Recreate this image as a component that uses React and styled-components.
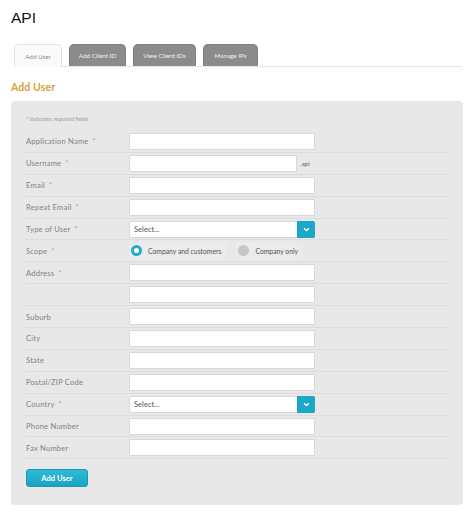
import React from "react";
import styled, { createGlobalStyle } from "styled-components";

const Global = createGlobalStyle`
  html, body { margin: 0; padding: 0; background: #fff; }
  body { font-family: "Lato", "Liberation Sans", sans-serif; }
  * { box-sizing: border-box; }
`;

const Page = styled.div`
  padding: 9px 11px 0 11px;
  width: 474px;
`;

const Title = styled.h1`
  margin: 0;
  font-family: "Liberation Sans", sans-serif;
  font-size: 15.5px;
  font-weight: 400;
  color: #111;
  line-height: 18px;
`;

const TabBar = styled.div`
  display: flex;
  gap: 7px;
  margin: 17px 1px 0 3px;
  border-bottom: 1px solid #e6e6e6;
  height: 23px;
  align-items: flex-end;
`;

const Tab = styled.div`
  width: ${(p) => p.$w}px;
  border-radius: 5px 5px 0 0;
  display: flex;
  align-items: center;
  justify-content: center;
  font-size: 6.3px;
  background: ${(p) => (p.$active ? "#fafafa" : "#8b8b8b")};
  color: ${(p) => (p.$active ? "#8a8a8a" : "#f2f2f2")};
  border: 1px solid ${(p) => (p.$active ? "#e2e2e2" : "#7f7f7f")};
  border-bottom: none;
  margin-bottom: ${(p) => (p.$active ? "-1px" : "0")};
  height: ${(p) => (p.$active ? "23px" : "22px")};
`;

const SectionTitle = styled.h2`
  margin: 14px 0 0 0;
  font-size: 10.5px;
  font-weight: 700;
  color: #d6a33e;
  line-height: 12px;
  letter-spacing: 0.1px;
`;

const Panel = styled.div`
  margin-top: 8px;
  width: 452px;
  background: #e8e8e8;
  border-radius: 4px;
  padding: 13px 15px 18px 14px;
`;

const Note = styled.div`
  font-size: 6px;
  font-style: italic;
  color: #a0a0a0;
  line-height: 10px;
  margin-bottom: 7px;
  padding-left: 1px;
`;

const Row = styled.div`
  display: grid;
  grid-template-columns: 103px 1fr;
  align-items: center;
  height: 21.9px;
  border-bottom: 1px solid #dddddd;
  padding-left: 1px;
`;

const Label = styled.div`
  font-size: 7.6px;
  color: #828282;
  letter-spacing: 0.2px;
`;

const Star = styled.span`
  color: #d6a33e;
  margin-left: 4px;
`;

const FieldWrap = styled.div`
  display: flex;
  align-items: center;
  gap: 3px;
`;

const Input = styled.div`
  width: ${(p) => p.$w || 186}px;
  height: 17px;
  background: #fff;
  border: 1px solid #d8d8d8;
  border-radius: 1px;
`;

const Suffix = styled.span`
  font-size: 6.3px;
  color: #666;
`;

const Select = styled.div`
  width: 186px;
  height: 17px;
  background: #fff;
  border: 1px solid #d8d8d8;
  border-radius: 2px;
  display: flex;
  align-items: center;
  justify-content: space-between;
  font-size: 7.6px;
  color: #555;
  padding-left: 4px;
`;

const SelectBtn = styled.div`
  width: 18px;
  height: 17px;
  margin: -1px -1px -1px 0;
  background: #1ba7c8;
  border-radius: 0 2px 2px 0;
  display: flex;
  align-items: center;
  justify-content: center;
`;

const Radios = styled.div`
  display: flex;
  gap: 10px;
  align-items: center;
`;

const RadioOpt = styled.div`
  display: flex;
  align-items: center;
  gap: 6px;
  height: 18px;
  padding: 0 5px 0 2px;
  background: #ebebeb;
  border-radius: 2px;
  font-size: 6.8px;
  color: #555;
`;

const Dot = styled.span`
  width: 11px;
  height: 11px;
  border-radius: 50%;
  background: ${(p) => (p.$on ? "#fff" : "#c7c7c7")};
  border: ${(p) => (p.$on ? "3px solid #22aeca" : "none")};
`;

const Button = styled.button`
  margin-top: 10px;
  width: 62px;
  height: 18px;
  border-radius: 3px;
  border: 1px solid #1a98b4;
  background: linear-gradient(#2ebbd6, #17a4c3);
  color: #fff;
  font-family: "Lato", "Liberation Sans", sans-serif;
  font-size: 7.6px;
  font-weight: 700;
  padding: 0;
  margin-left: 1px;
`;

const Chevron = () => (
  <svg width="7" height="5" viewBox="0 0 7 5">
    <path d="M1 1.2 L3.5 3.6 L6 1.2" stroke="#fff" strokeWidth="1.4" fill="none" />
  </svg>
);

const rows = [
  { label: "Application Name", req: true, type: "input" },
  { label: "Username", req: true, type: "user" },
  { label: "Email", req: true, type: "input" },
  { label: "Repeat Email", req: true, type: "input" },
  { label: "Type of User", req: true, type: "select" },
  { label: "Scope", req: true, type: "radio" },
  { label: "Address", req: true, type: "input" },
  { label: "", type: "input" },
  { label: "Suburb", type: "input" },
  { label: "City", type: "input" },
  { label: "State", type: "input" },
  { label: "Postal/ZIP Code", type: "input" },
  { label: "Country", req: true, type: "select" },
  { label: "Phone Number", type: "input" },
  { label: "Fax Number", type: "input" },
];

function Field({ type }) {
  if (type === "user")
    return (
      <FieldWrap>
        <Input $w={168} />
        <Suffix>.api</Suffix>
      </FieldWrap>
    );
  if (type === "select")
    return (
      <Select>
        Select...
        <SelectBtn>
          <Chevron />
        </SelectBtn>
      </Select>
    );
  if (type === "radio")
    return (
      <Radios>
        <RadioOpt>
          <Dot $on />
          Company and customers
        </RadioOpt>
        <RadioOpt>
          <Dot />
          Company only
        </RadioOpt>
      </Radios>
    );
  return <Input />;
}

export default function App() {
  return (
    <>
      <Global />
      <Page>
        <Title>API</Title>
        <TabBar>
          <Tab $active $w={48}>Add User</Tab>
          <Tab $w={57}>Add Client ID</Tab>
          <Tab $w={63}>View Client IDs</Tab>
          <Tab $w={55}>Manage IPs</Tab>
        </TabBar>
        <SectionTitle>Add User</SectionTitle>
        <Panel>
          <Note>* indicates required fields</Note>
          {rows.map((r, i) => (
            <Row key={i}>
              <Label>
                {r.label}
                {r.req && <Star>*</Star>}
              </Label>
              <Field type={r.type} />
            </Row>
          ))}
          <Button>Add User</Button>
        </Panel>
      </Page>
    </>
  );
}
